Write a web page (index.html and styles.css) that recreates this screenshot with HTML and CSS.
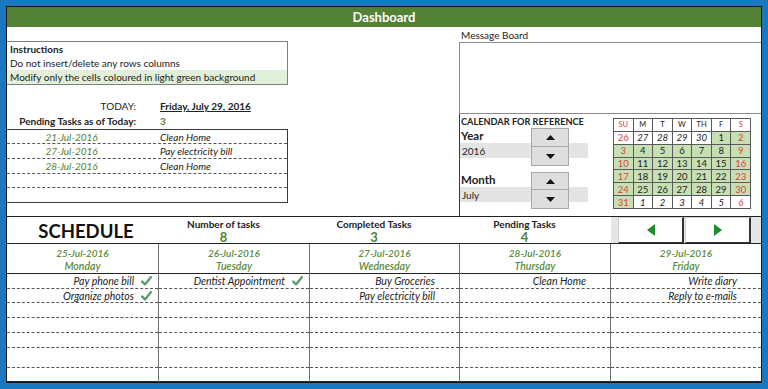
FILE: index.html
```html
<!DOCTYPE html>
<html lang="en">
<head>
<meta charset="utf-8">
<title>Dashboard</title>
<link rel="stylesheet" href="styles.css">
</head>
<body>
<div class="frame">
  <div class="title">Dashboard</div>
  <div class="top">
    <div class="left">
      <div class="instr">
        <div class="instr-row b">Instructions</div>
        <div class="instr-row">Do not insert/delete any rows columns</div>
        <div class="instr-row lg">Modify only the cells coloured in light green background</div>
      </div>
      <div class="kv first"><span class="k">TODAY:</span><span class="v date">Friday, July 29, 2016</span></div>
      <div class="kv b"><span class="k">Pending Tasks as of Today:</span><span class="v num">3</span></div>
      <div class="pending">
        <div class="prow h14"><span class="pdate">21-Jul-2016</span><span class="ptask">Clean Home</span></div>
        <div class="prow h15"><span class="pdate">27-Jul-2016</span><span class="ptask">Pay electricity bill</span></div>
        <div class="prow h15"><span class="pdate">28-Jul-2016</span><span class="ptask">Clean Home</span></div>
        <div class="prow h14"></div>
        <div class="prow h14 last"></div>
      </div>
    </div>
    <div class="right">
      <div class="mb-label">Message Board</div>
      <div class="mb-box"></div>
      <div class="cal">
        <div class="cal-controls">
          <div class="cal-title">CALENDAR FOR REFERENCE</div>
          <div class="spin year">
            <div class="spin-label">Year</div>
            <div class="spin-bar"></div>
            <div class="spin-value">2016</div>
            <div class="btn up"><svg width="9" height="5" viewBox="0 0 9 5"><polygon points="4.5,0 9,5 0,5" fill="#111"/></svg></div>
            <div class="btn down"><svg width="9" height="5" viewBox="0 0 9 5"><polygon points="0,0 9,0 4.5,5" fill="#111"/></svg></div>
          </div>
          <div class="spin month">
            <div class="spin-label">Month</div>
            <div class="spin-bar"></div>
            <div class="spin-value">July</div>
            <div class="btn up"><svg width="9" height="5" viewBox="0 0 9 5"><polygon points="4.5,0 9,5 0,5" fill="#111"/></svg></div>
            <div class="btn down"><svg width="9" height="5" viewBox="0 0 9 5"><polygon points="0,0 9,0 4.5,5" fill="#111"/></svg></div>
          </div>
        </div>
        <div class="cal-grid">
          <div class="hd r">SU</div><div class="hd">M</div><div class="hd">T</div><div class="hd">W</div><div class="hd">TH</div><div class="hd">F</div><div class="hd r">S</div>
          <div class="r">26</div><div class="i">27</div><div class="i">28</div><div class="i">29</div><div class="i">30</div><div class="g">1</div><div class="g r">2</div>
          <div class="g r">3</div><div class="g">4</div><div class="g">5</div><div class="g">6</div><div class="g">7</div><div class="g">8</div><div class="g r">9</div>
          <div class="g r">10</div><div class="g">11</div><div class="g">12</div><div class="g">13</div><div class="g">14</div><div class="g">15</div><div class="g r">16</div>
          <div class="g r">17</div><div class="g">18</div><div class="g">19</div><div class="g">20</div><div class="g">21</div><div class="g">22</div><div class="g r">23</div>
          <div class="g r">24</div><div class="g">25</div><div class="g">26</div><div class="g">27</div><div class="g">28</div><div class="g">29</div><div class="g r">30</div>
          <div class="g r">31</div><div class="i">1</div><div class="i">2</div><div class="i">3</div><div class="i">4</div><div class="i">5</div><div class="i r">6</div>
        </div>
      </div>
    </div>
  </div>
  <div class="sched">
    <div class="stats">
      <div class="stat-title">SCHEDULE</div>
      <div class="stat"><div class="stat-label">Number of tasks</div><div class="stat-num">8</div></div>
      <div class="stat"><div class="stat-label">Completed Tasks</div><div class="stat-num">3</div></div>
      <div class="stat"><div class="stat-label">Pending Tasks</div><div class="stat-num">4</div></div>
      <div class="nav">
        <div class="nav-btn"><svg width="8" height="12" viewBox="0 0 8 12"><polygon points="8,0 8,12 0,6" fill="#1f8a2c"/></svg></div>
        <div class="nav-btn"><svg width="8" height="12" viewBox="0 0 8 12"><polygon points="0,0 8,6 0,12" fill="#1f8a2c"/></svg></div>
      </div>
    </div>
    <div class="days">
      <div class="day">
        <div class="day-head"><div class="day-date">25-Jul-2016</div><div class="day-name">Monday</div></div>
        <div class="task r15"><span class="txt">Pay phone bill</span><span class="chk"><svg width="11" height="10" viewBox="0 0 11 10"><path d="M1.2 5.6 L4 8.4 L9.8 1.2" fill="none" stroke="#5e9c70" stroke-width="2.4" stroke-linecap="round" stroke-linejoin="round"/></svg></span></div>
        <div class="task r14"><span class="txt">Organize photos</span><span class="chk"><svg width="11" height="10" viewBox="0 0 11 10"><path d="M1.2 5.6 L4 8.4 L9.8 1.2" fill="none" stroke="#5e9c70" stroke-width="2.4" stroke-linecap="round" stroke-linejoin="round"/></svg></span></div>
        <div class="task r15"></div><div class="task r15"></div><div class="task r15"></div><div class="task r20"></div><div class="task r14 end"></div>
      </div>
      <div class="day">
        <div class="day-head"><div class="day-date">26-Jul-2016</div><div class="day-name">Tuesday</div></div>
        <div class="task r15"><span class="txt">Dentist Appointment</span><span class="chk"><svg width="11" height="10" viewBox="0 0 11 10"><path d="M1.2 5.6 L4 8.4 L9.8 1.2" fill="none" stroke="#5e9c70" stroke-width="2.4" stroke-linecap="round" stroke-linejoin="round"/></svg></span></div>
        <div class="task r14"></div>
        <div class="task r15"></div><div class="task r15"></div><div class="task r15"></div><div class="task r20"></div><div class="task r14 end"></div>
      </div>
      <div class="day">
        <div class="day-head"><div class="day-date">27-Jul-2016</div><div class="day-name">Wednesday</div></div>
        <div class="task r15"><span class="txt">Buy Groceries</span><span class="chk"></span></div>
        <div class="task r14"><span class="txt">Pay electricity bill</span><span class="chk"></span></div>
        <div class="task r15"></div><div class="task r15"></div><div class="task r15"></div><div class="task r20"></div><div class="task r14 end"></div>
      </div>
      <div class="day">
        <div class="day-head"><div class="day-date">28-Jul-2016</div><div class="day-name">Thursday</div></div>
        <div class="task r15"><span class="txt">Clean Home</span><span class="chk"></span></div>
        <div class="task r14"></div>
        <div class="task r15"></div><div class="task r15"></div><div class="task r15"></div><div class="task r20"></div><div class="task r14 end"></div>
      </div>
      <div class="day lastcol">
        <div class="day-head"><div class="day-date">29-Jul-2016</div><div class="day-name">Friday</div></div>
        <div class="task r15"><span class="txt">Write diary</span><span class="chk"></span></div>
        <div class="task r14"><span class="txt">Reply to e-mails</span><span class="chk"></span></div>
        <div class="task r15"></div><div class="task r15"></div><div class="task r15"></div><div class="task r20"></div><div class="task r14 end"></div>
      </div>
    </div>
  </div>
</div>
</body>
</html>
```

FILE: styles.css
```css
* { box-sizing: border-box; margin: 0; padding: 0; }
html, body { width: 768px; height: 389px; overflow: hidden; }
body {
  background: #1a78c0;
  font-family: Lato, "Open Sans", sans-serif;
  font-size: 10px;
  color: #222;
  padding: 6px 0 0 6px;
}
.b { font-weight: 700; }

.frame {
  width: 756px;
  height: 377px;
  border: 1px solid #161616;
  background: #fff;
  display: flex;
  flex-direction: column;
}
.title {
  height: 20px;
  background: #538135;
  color: #fff;
  font-weight: 700;
  font-size: 13px;
  line-height: 20px;
  text-align: center;
}

.top { height: 189px; display: flex; }
.left { width: 452px; padding-top: 14px; }
.right { width: 302px; display: flex; flex-direction: column; }

.instr { width: 281px; border: 1px solid #7f7f7f; border-left: 0; }
.instr-row { height: 14px; line-height: 14px; padding-left: 3px; }
.instr-row.lg { background: #e2efda; }

.kv { display: flex; height: 15px; line-height: 15px; }
.kv.first { margin-top: 14px; }
.k { width: 129px; text-align: right; }
.v { margin-left: 24px; }
.date { font-weight: 700; text-decoration: underline; }
.num { color: #538135; font-weight: 700; }

.pending { width: 281px; border: 1px solid #3a3a3a; border-left: 0; }
.prow { display: flex; align-items: center; border-bottom: 1px dashed #555; }
.prow.last { border-bottom: 0; }
.h14 { height: 14px; }
.h15 { height: 15px; }
.pdate { width: 129px; text-align: center; font-style: italic; color: #538135; }
.ptask { margin-left: 24px; font-style: italic; }

.mb-label { height: 15px; line-height: 16px; padding-left: 2px; }
.mb-box { height: 72px; border: 1px solid #8a8a8a; border-right: 0; }
.cal { flex: 1; border-left: 1px solid #3a3a3a; display: flex; }
.cal-controls { width: 153px; }
.cal-title { height: 14px; line-height: 15px; font-weight: 700; font-size: 9.2px; padding-left: 1px; }

.spin {
  display: grid;
  grid-template-columns: 71px 38px 19px;
}
.spin.year { grid-template-rows: 15px 4px 11px 8px; }
.spin.month { grid-template-rows: 15px 3px 12px 7px; margin-top: 6px; }
.spin-label {
  grid-row: 1; grid-column: 1;
  font-weight: 700; font-size: 11.5px;
  align-self: end; line-height: 14px;
  padding-left: 1px;
}
.spin-bar { grid-row: 2 / 4; grid-column: 1 / 4; background: #e4e4e4; }
.spin-value { grid-row: 2 / 4; grid-column: 1; padding-left: 2px; align-self: center; z-index: 1; }
.btn {
  grid-column: 2;
  background: #dedede;
  border: 1px solid #a9a9a9;
  display: flex; align-items: center; justify-content: center;
  z-index: 2;
}
.btn.up { grid-row: 1 / 3; }
.btn.down { grid-row: 3 / 5; border-top: 0; }

.cal-grid {
  width: 138px;
  height: 91px;
  margin-top: 4px;
  display: grid;
  grid-template-columns: repeat(7, 1fr);
  grid-template-rows: repeat(7, 1fr);
  gap: 1px;
  padding: 1px;
  background: #5a5a5a;
}
.cal-grid > div {
  background: #fff;
  display: flex; align-items: center; justify-content: center;
  font-size: 9.5px;
  color: #222;
}
.cal-grid > .hd { font-size: 7.5px; }
.cal-grid > .g { background: #c6e0b4; }
.cal-grid > .r { color: #e23b3b; }
.cal-grid > .i { font-style: italic; }

.sched { flex: 1; border-top: 1px solid #222; display: flex; flex-direction: column; }
.stats, .days { display: grid; grid-template-columns: 152px 151px 150px 151px 150px; }
.stats { height: 26px; }
.stat-title {
  font-weight: 700; font-size: 18.5px;
  display: flex; align-items: center; justify-content: center;
  padding-left: 6px;
  color: #111;
}
.stat { padding-right: 22px; text-align: center; padding-top: 1px; }
.stat-label { font-weight: 700; line-height: 12px; }
.stat-num { color: #538135; font-weight: 700; font-size: 13px; line-height: 13px; margin-top: 1px; }
.nav { background: #e6e6e6; display: flex; gap: 1px; padding-left: 7px; }
.nav-btn {
  width: 66px;
  background: #fff;
  border-top: 1px solid #d0d0d0;
  border-left: 1px solid #d0d0d0;
  border-right: 2px solid #333;
  border-bottom: 2px solid #333;
  display: flex; align-items: center; justify-content: center;
}

.days { flex: 1; border-top: 1px solid #222; }
.day { border-right: 1px solid #6e6e6e; display: flex; flex-direction: column; }
.day.lastcol { border-right: 0; }
.day-head {
  height: 30px;
  border-bottom: 1px solid #222;
  padding-top: 2px;
  text-align: center;
  font-style: italic;
  font-weight: 600;
  color: #5a8c3c;
}
.day-date { line-height: 14px; }
.day-name { line-height: 13px; font-size: 10.5px; }
.task {
  display: flex;
  align-items: center;
  justify-content: flex-end;
  border-bottom: 1px dashed #555;
  font-style: italic;
  font-size: 10.5px;
}
.task.end { border-bottom: 1px solid #222; }
.r14 { height: 14px; }
.r15 { height: 15px; }
.r20 { height: 20px; }
.txt { text-align: right; }
.chk { width: 24px; display: flex; justify-content: center; align-items: center; }
```
